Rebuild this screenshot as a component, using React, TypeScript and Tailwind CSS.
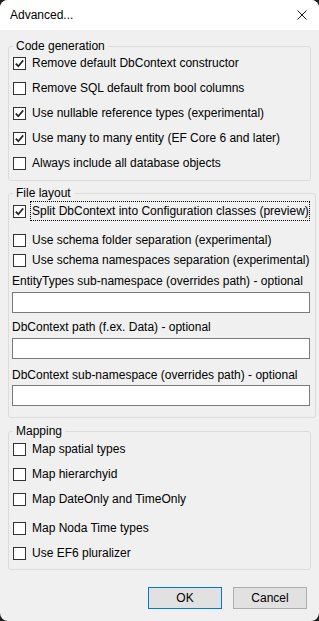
import React from "react"

const font = { fontFamily: '"Liberation Sans", Arial, sans-serif' }

function CheckRow({ label, checked = false, focus = false, className = "" }: { label: string; checked?: boolean; focus?: boolean; className?: string }) {
  return (
    <div className={`flex h-[20px] items-center ${className}`}>
      <span className="flex h-[13px] w-[13px] shrink-0 items-center justify-center border border-[#333333] bg-white">
        {checked && (
          <svg width="11" height="11" viewBox="0 0 11 11">
            <path d="M1.8 5.6 L4.3 8.2 L9.2 2.4" fill="none" stroke="#262626" strokeWidth="1.7" />
          </svg>
        )}
      </span>
      {focus ? (
        <span className="ml-[4px] flex h-[20px] flex-1 items-center border border-dotted border-black pl-[1px] whitespace-nowrap">{label}</span>
      ) : (
        <span className="ml-[6px] whitespace-nowrap">{label}</span>
      )}
    </div>
  )
}

function Group({ title, className = "", children }: { title: string; className?: string; children: React.ReactNode }) {
  return (
    <fieldset className={`rounded-[3px] border border-[#dcdcdc] pl-[4px] pr-[5px] ${className}`}>
      <legend className="px-[3px] text-[12px] leading-[14px]">{title}</legend>
      {children}
    </fieldset>
  )
}

function Field({ label, className = "", boxClass = "" }: { label: string; className?: string; boxClass?: string }) {
  return (
    <>
      <div className={`ml-[-1px] h-[15px] leading-[15px] whitespace-nowrap ${className}`}>{label}</div>
      <input readOnly className={`ml-[-1px] block h-[21px] w-[calc(100%+1px)] border border-[#7a7a7a] bg-white outline-none ${boxClass}`} />
    </>
  )
}

export default function App() {
  return (
    <div className="h-[621px] w-[319px] bg-[#1e1e1e]">
      <div className="flex h-full w-full flex-col overflow-hidden rounded-[8px] bg-[#f0f0f0] text-[12px] text-black" style={font}>
        {/* Title bar */}
        <div className="flex h-[30px] shrink-0 items-center justify-between bg-white pl-[10px] pr-[12px]">
          <span className="text-[12px]">Advanced...</span>
          <svg width="10" height="10" viewBox="0 0 10 10">
            <path d="M0.5 0.5 L9.5 9.5 M9.5 0.5 L0.5 9.5" stroke="#1a1a1a" strokeWidth="1" />
          </svg>
        </div>

        <div className="px-[8px]">
          <Group title="Code generation" className="mt-[9px] pb-[7px]">
            <div className="flex flex-col gap-[5px]">
              <CheckRow label="Remove default DbContext constructor" checked />
              <CheckRow label="Remove SQL default from bool columns" />
              <CheckRow label="Use nullable reference types (experimental)" checked />
              <CheckRow label="Use many to many entity (EF Core 6 and later)" checked />
              <CheckRow label="Always include all database objects" />
            </div>
          </Group>

          <Group title="File layout" className="mt-[5px] pb-[11px]">
            <CheckRow label="Split DbContext into Configuration classes (preview)" checked focus className="mt-[1px]" />
            <CheckRow label="Use schema folder separation (experimental)" className="mt-[9px]" />
            <CheckRow label="Use schema namespaces separation (experimental)" />
            <Field label="EntityTypes sub-namespace (overrides path) - optional" className="mt-[4px]" boxClass="mt-[3px]" />
            <Field label="DbContext path (f.ex. Data) - optional" className="mt-[7px]" boxClass="mt-[3px]" />
            <Field label="DbContext sub-namespace (overrides path) - optional" className="mt-[9px]" boxClass="mt-[2px]" />
          </Group>

          <Group title="Mapping" className="mt-[6px] pb-[6px]">
            <CheckRow label="Map spatial types" className="mt-[1px]" />
            <CheckRow label="Map hierarchyid" className="mt-[5px]" />
            <CheckRow label="Map DateOnly and TimeOnly" className="mt-[5px]" />
            <CheckRow label="Map Noda Time types" className="mt-[9px]" />
            <CheckRow label="Use EF6 pluralizer" className="mt-[5px]" />
          </Group>
        </div>

        <div className="mt-[17px] flex justify-end gap-[11px] pr-[12px]">
          <button className="h-[22px] w-[74px] border border-[#0078d7] bg-[#e1e1e1] text-[12px]">OK</button>
          <button className="h-[22px] w-[74px] border border-[#adadad] bg-[#e1e1e1] text-[12px]">Cancel</button>
        </div>
      </div>
    </div>
  )
}
